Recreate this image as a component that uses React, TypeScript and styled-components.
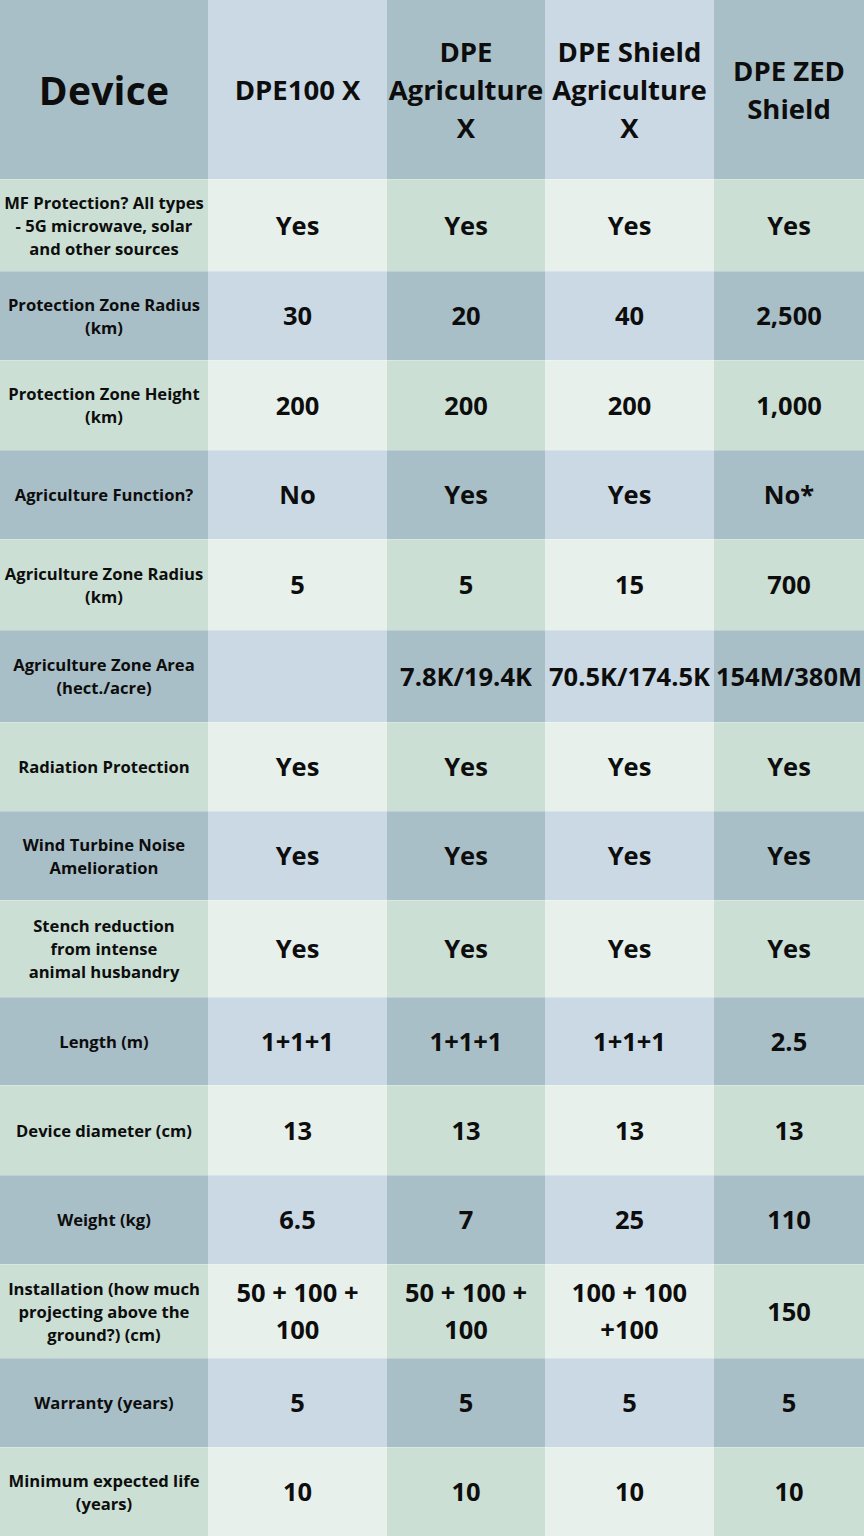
import styled, { createGlobalStyle } from "styled-components";

const GlobalStyle = createGlobalStyle`
    html, body {
        margin: 0;
        padding: 0;
        background: #ffffff;
    }
    body {
        font-family: "Open Sans", "Liberation Sans", sans-serif;
        color: #0d0d0d;
    }
`;

type Tone = "blue" | "green";

const palette = {
    blue: { strong: "#a9bfc8", soft: "#cbd9e4" },
    green: { strong: "#cbdfd4", soft: "#e7f0eb" },
};

const headers = ["DPE100 X", "DPE Agriculture X", "DPE Shield Agriculture X", "DPE ZED Shield"];

// label lines are kept as in the printed sheet
const rows: { label: string; values: string[]; height: number }[] = [
    { label: "MF Protection? All types\n- 5G microwave, solar\nand other sources", values: ["Yes", "Yes", "Yes", "Yes"], height: 92 },
    { label: "Protection Zone Radius\n(km)", values: ["30", "20", "40", "2,500"], height: 89 },
    { label: "Protection Zone Height\n(km)", values: ["200", "200", "200", "1,000"], height: 90 },
    { label: "Agriculture Function?", values: ["No", "Yes", "Yes", "No*"], height: 89 },
    { label: "Agriculture Zone Radius\n(km)", values: ["5", "5", "15", "700"], height: 91 },
    { label: "Agriculture Zone Area\n(hect./acre)", values: ["", "7.8K/19.4K", "70.5K/174.5K", "154M/380M"], height: 92 },
    { label: "Radiation Protection", values: ["Yes", "Yes", "Yes", "Yes"], height: 89 },
    { label: "Wind Turbine Noise\nAmelioration", values: ["Yes", "Yes", "Yes", "Yes"], height: 89 },
    { label: "Stench reduction\nfrom intense\nanimal husbandry", values: ["Yes", "Yes", "Yes", "Yes"], height: 97 },
    { label: "Length (m)", values: ["1+1+1", "1+1+1", "1+1+1", "2.5"], height: 88 },
    { label: "Device diameter (cm)", values: ["13", "13", "13", "13"], height: 90 },
    { label: "Weight (kg)", values: ["6.5", "7", "25", "110"], height: 89 },
    { label: "Installation (how much\nprojecting above the\nground?) (cm)", values: ["50 + 100 +\n100", "50 + 100 +\n100", "100 + 100\n+100", "150"], height: 94 },
    { label: "Warranty (years)", values: ["5", "5", "5", "5"], height: 89 },
    { label: "Minimum expected life\n(years)", values: ["10", "10", "10", "10"], height: 89 },
];

const App = (): JSX.Element => {
    return (<>
        <GlobalStyle />
        <Table>
            <Row $height={179}>
                <Cell $bg={palette.blue.strong}>
                    <Title>Device</Title>
                </Cell>
                {headers.map((h, i) => (
                    <Cell key={h} $bg={i % 2 === 0 ? palette.blue.soft : palette.blue.strong}>
                        <Heading>{h}</Heading>
                    </Cell>
                ))}
            </Row>
            {rows.map((row, r) => {
                const tone: Tone = r % 2 === 0 ? "green" : "blue";
                return (
                    <Row key={row.label} $height={row.height}>
                        <Cell $bg={palette[tone].strong} $divider>
                            <Label>{row.label}</Label>
                        </Cell>
                        {row.values.map((v, i) => (
                            <Cell key={i} $bg={i % 2 === 0 ? palette[tone].soft : palette[tone].strong} $divider>
                                <Value>{v}</Value>
                            </Cell>
                        ))}
                    </Row>
                );
            })}
        </Table>
    </>
    );
};

const Table = styled.div`
    width: 864px;
    display: flex;
    flex-direction: column;
`;

const Row = styled.div<{ $height: number }>`
    display: grid;
    grid-template-columns: 208px 179px 158px 169px 150px;
    height: ${(p) => p.$height}px;
`;

const Cell = styled.div<{ $bg: string; $divider?: boolean }>`
    display: flex;
    align-items: center;
    justify-content: center;
    text-align: center;
    background-color: ${(p) => p.$bg};
    box-shadow: ${(p) => (p.$divider ? "inset 0 1px 0 rgba(255, 255, 255, 0.25)" : "none")};
    white-space: nowrap;
`;

const Title = styled.div`
    font-size: 39px;
    font-weight: 700;
    letter-spacing: 0.2px;
`;

const Heading = styled.div`
    font-size: 27.5px;
    font-weight: 700;
    line-height: 38px;
    white-space: normal;
    padding: 0 2px;
`;

const Label = styled.div`
    font-size: 16.6px;
    font-weight: 700;
    line-height: 23px;
    white-space: pre-line;
`;

const Value = styled.div`
    font-size: 25.5px;
    font-weight: 700;
    line-height: 37px;
    white-space: pre-line;
`;

export default App;
